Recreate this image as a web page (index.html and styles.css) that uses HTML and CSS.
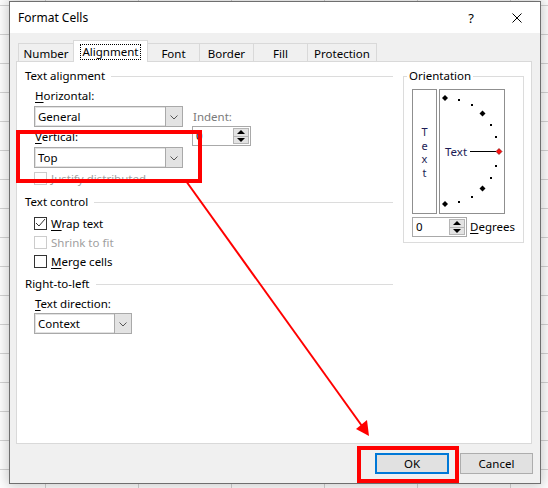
FILE: index.html
```html
<!DOCTYPE html>
<html lang="en">
<head>
<meta charset="utf-8">
<title>Format Cells</title>
<link rel="stylesheet" href="styles.css">
</head>
<body>
<div class="dialog">
  <div class="titlebar">
    <span class="title">Format Cells</span>
    <span class="tb-btn help">?</span>
    <span class="tb-btn close"><svg width="10" height="10" viewBox="0 0 10 10"><path d="M0.5 0.5 L9.5 9.5 M9.5 0.5 L0.5 9.5" stroke="#000" stroke-width="1" fill="none"/></svg></span>
  </div>
  <div class="body">
    <div class="tabs">
      <div class="tab t-number">Number</div>
      <div class="tab t-align active"><span class="focus">Alignment</span></div>
      <div class="tab t-font">Font</div>
      <div class="tab t-border">Border</div>
      <div class="tab t-fill">Fill</div>
      <div class="tab t-prot">Protection</div>
    </div>
    <div class="panel">
      <div class="left">
        <div class="group-head">Text alignment</div>
        <div class="group-body align-grid">
          <div class="col-main">
            <div class="lbl"><u>H</u>orizontal:</div>
            <div class="combo c-wide"><span class="val">General</span><span class="dd"><svg width="8" height="5" viewBox="0 0 8 5"><polyline points="0.5,0.5 4,4 7.5,0.5" fill="none" stroke="#555" stroke-width="1"/></svg></span></div>
            <div class="lbl lbl-next"><u>V</u>ertical:</div>
            <div class="combo c-wide"><span class="val">Top</span><span class="dd"><svg width="8" height="5" viewBox="0 0 8 5"><polyline points="0.5,0.5 4,4 7.5,0.5" fill="none" stroke="#555" stroke-width="1"/></svg></span></div>
          </div>
          <div class="col-indent">
            <div class="lbl dis-dark">Indent:</div>
            <div class="spin s-indent"><span class="val">0</span><span class="spin-btns"><span class="sb up"></span><span class="sb down"></span></span></div>
          </div>
        </div>
        <div class="group-body">
          <div class="check-row dis r-justify"><span class="box"></span><span>Justify distributed</span></div>
        </div>

        <div class="group-head h-control">Text control</div>
        <div class="group-body">
          <div class="check-row r-first"><span class="box"><svg width="11" height="11" viewBox="0 0 11 11"><polyline points="1,5 4,8 10,1" fill="none" stroke="#333" stroke-width="1"/></svg></span><span><u>W</u>rap text</span></div>
          <div class="check-row dis r-next"><span class="box"></span><span>Shrink to fit</span></div>
          <div class="check-row r-next"><span class="box"></span><span><u>M</u>erge cells</span></div>
        </div>

        <div class="group-head h-rtl">Right-to-left</div>
        <div class="group-body">
          <div class="lbl lbl-dir"><u>T</u>ext direction:</div>
          <div class="combo c-narrow"><span class="val">Context</span><span class="dd"><svg width="8" height="5" viewBox="0 0 8 5"><polyline points="0.5,0.5 4,4 7.5,0.5" fill="none" stroke="#555" stroke-width="1"/></svg></span></div>
        </div>
      </div>

      <fieldset class="orient">
        <legend>Orientation</legend>
        <div class="orient-boxes">
          <div class="vtext"><span>T</span><span>e</span><span>x</span><span>t</span></div>
          <div class="dial">
            <svg width="64" height="123" viewBox="0 0 64 123">
              <g fill="#000">
                <polygon points="5,5 8,8 5,11 2,8"/>
                <polygon points="42.5,20.5 45.5,23.5 42.5,26.5 39.5,23.5"/>
                <polygon points="42.5,95.5 45.5,98.5 42.5,101.5 39.5,98.5"/>
                <polygon points="5,111 8,114 5,117 2,114"/>
                <rect x="18" y="9" width="2" height="2"/>
                <rect x="31" y="14" width="2" height="2"/>
                <rect x="50" y="34" width="2" height="2"/>
                <rect x="55" y="46" width="2" height="2"/>
                <rect x="55" y="75" width="2" height="2"/>
                <rect x="50" y="87" width="2" height="2"/>
                <rect x="31" y="106" width="2" height="2"/>
                <rect x="18" y="111" width="2" height="2"/>
              </g>
              <line x1="30" y1="61.5" x2="56" y2="61.5" stroke="#000" stroke-width="1"/>
              <polygon points="59,58.5 62,61.5 59,64.5 56,61.5" fill="#ff1010" stroke="#600" stroke-width="0.6"/>
              <text x="5" y="66" class="dial-text">Text</text>
            </svg>
          </div>
        </div>
        <div class="deg-row">
          <div class="spin s-deg"><span class="val">0</span><span class="spin-btns"><span class="sb up"></span><span class="sb down"></span></span></div>
          <span class="deg-lbl"><u>D</u>egrees</span>
        </div>
      </fieldset>
    </div>
    <div class="buttons">
      <div class="btn btn-ok">OK</div>
      <div class="btn btn-cancel">Cancel</div>
    </div>
  </div>
</div>

<svg class="marks" width="548" height="488" viewBox="0 0 548 488">
  <rect x="18" y="132" width="182" height="49" fill="none" stroke="#ff0000" stroke-width="4"/>
  <line x1="186" y1="181" x2="362" y2="426" stroke="#ff0000" stroke-width="2"/>
  <polygon points="369,436 356,429 367,420" fill="#ff0000"/>
  <rect x="359" y="448" width="98" height="33" fill="none" stroke="#ff0000" stroke-width="4"/>
</svg>
</body>
</html>
```

FILE: styles.css
```css
* { box-sizing: border-box; }

html {
  background: #fff;
}

body {
  margin: 0;
  padding: 1px 0 0 9px;
  width: 548px;
  height: 488px;
  overflow: hidden;
  position: relative;
  font-family: "Segoe UI", "Noto Sans", sans-serif;
  font-size: 11.5px;
  color: #000;
  background-color: #fff;
  /* worksheet gridlines behind the dialog */
  background-image:
    linear-gradient(to right, #d4d4d4 1px, transparent 1px),
    linear-gradient(to bottom, #d4d4d4 1px, transparent 1px);
  background-size: 93px 100%, 100% 29px;
  background-position: 45px 0, 0 5px;
}

u { text-decoration: underline; text-underline-offset: 2px; }

/* ---------- dialog window ---------- */
.dialog {
  width: 532px;
  height: 483px;
  border: 1px solid #6f6f6f;
  background: #f0f0f0;
  box-shadow: 0 0 12px 2px rgba(0, 0, 0, 0.22);
  display: flex;
  flex-direction: column;
}

.titlebar {
  height: 31px;
  background: #fff;
  display: flex;
  align-items: center;
  padding-left: 8px;
  flex: none;
}

.title {
  flex: 1;
  line-height: 16px;
  font-size: 12px;
}

.tb-btn {
  width: 46px;
  height: 31px;
  display: flex;
  align-items: center;
  justify-content: center;
}

.help {
  font-size: 13px;
}

.body {
  flex: 1;
  padding: 7px 8px 0 6px;
  display: flex;
  flex-direction: column;
}

/* ---------- tabs ---------- */
.tabs {
  display: flex;
  align-items: flex-end;
  height: 21px;
  padding-left: 2px;
}

.tab {
  height: 18px;
  border: 1px solid #d9d9d9;
  border-bottom: none;
  background: #f0f0f0;
  display: flex;
  align-items: center;
  justify-content: center;
  padding-top: 2px;
  margin-left: -1px;
  line-height: 14px;
}

.tab:first-child { margin-left: 0; }

.t-number { width: 56px; }
.t-align { width: 75px; }
.t-font { width: 53px; }
.t-border { width: 55px; }
.t-fill { width: 55px; }
.t-prot { width: 70px; }

.tab.active {
  height: 22px;
  margin-bottom: -1px;
  background: #fff;
  position: relative;
  z-index: 1;
  padding-top: 1px;
}

.focus {
  outline: 1px dotted #000;
  padding: 0 2px;
  line-height: 14px;
}

/* ---------- page panel ---------- */
.panel {
  height: 383px;
  border: 1px solid #d9d9d9;
  background: #fff;
  display: flex;
  align-items: flex-start;
  padding: 6px 7px 0 8px;
  flex: none;
}

.left {
  width: 368px;
  flex: none;
}

.group-head {
  display: flex;
  align-items: center;
  height: 16px;
  line-height: 16px;
  white-space: nowrap;
}

.group-head::after {
  content: "";
  flex: 1;
  height: 1px;
  background: #dcdcdc;
  margin-left: 6px;
}

.h-control { margin-top: 8px; }
.h-rtl { margin-top: 7px; }

.group-body {
  padding-left: 9px;
}

.align-grid {
  display: flex;
  margin-top: 4px;
}

.col-main { width: 149px; }

.col-indent {
  margin-left: 9px;
  margin-top: 21px;
}

.lbl {
  height: 16px;
  line-height: 16px;
  white-space: nowrap;
  padding-left: 1px;
}

.lbl-next { margin-top: 2px; }
.lbl-dir { margin-top: 4px; }

.dis-dark { color: #7a7a7a; }

/* drop-down list */
.combo {
  display: flex;
  height: 21px;
  border: 1px solid #a9a9a9;
  box-shadow: inset 0 0 0 1px #e2e2e2;
  background: #fff;
  margin-top: 2px;
}

.c-wide { width: 149px; }
.c-narrow { width: 98px; margin-top: 1px; }

.combo .val {
  flex: 1;
  padding-left: 3px;
  line-height: 19px;
}

.combo .dd {
  width: 17px;
  background: #e3e3e3;
  border-left: 1px solid #a9a9a9;
  display: flex;
  align-items: center;
  justify-content: center;
  padding-top: 1px;
}

/* spin box */
.spin {
  display: flex;
  height: 20px;
  border: 1px solid #a9a9a9;
  background: #fff;
}

.s-indent { width: 59px; margin-top: 1px; }
.s-deg { width: 60px; }

.spin .val {
  flex: 1;
  padding-left: 3px;
  line-height: 18px;
}

.spin-btns {
  width: 17px;
  display: flex;
  flex-direction: column;
  padding: 1px 1px 1px 0;
}

.sb {
  flex: 1;
  background: #e3e3e3;
  border: 1px solid #b5b5b5;
  display: flex;
  align-items: center;
  justify-content: center;
}

.sb + .sb { border-top: none; }

.sb::before {
  content: "";
  width: 0;
  height: 0;
  border-left: 4px solid transparent;
  border-right: 4px solid transparent;
}

.sb.up::before { border-bottom: 4px solid #000; }
.sb.down::before { border-top: 4px solid #000; }

/* check boxes */
.check-row {
  display: flex;
  align-items: center;
  height: 16px;
  gap: 4px;
  white-space: nowrap;
}

.check-row .box {
  width: 13px;
  height: 13px;
  border: 1px solid #333;
  background: #fff;
  display: flex;
  align-items: center;
  justify-content: center;
  flex: none;
}

.check-row.dis { color: #a0a0a0; }
.check-row.dis .box { border-color: #cccccc; }

.r-justify { margin-top: 2px; }
.r-first { margin-top: 5px; }
.r-next { margin-top: 3px; }

/* ---------- orientation ---------- */
.orient {
  margin: 0 0 0 10px;
  padding: 0 8px 5px 8px;
  border: 1px solid #dcdcdc;
  width: 121px;
  height: 175px;
  min-width: 0;
  flex: none;
}

.orient legend {
  padding: 0 2px;
  margin-left: -5px;
  line-height: 16px;
}

.orient-boxes {
  display: flex;
  gap: 2px;
  margin-top: 5px;
}

.vtext, .dial {
  height: 125px;
  border: 1px solid #8f8f8f;
  background: #fff;
}

.vtext {
  width: 25px;
  display: flex;
  flex-direction: column;
  align-items: center;
  justify-content: center;
  color: #1c1c55;
  padding-top: 1px;
  font-size: 11px;
}

.vtext span {
  height: 13.5px;
  line-height: 13.5px;
}

.dial {
  width: 66px;
}

.dial svg { display: block; }

.dial-text {
  font-family: "Segoe UI", "Noto Sans", sans-serif;
  font-size: 11.5px;
  fill: #1c1c55;
}

.deg-row {
  display: flex;
  align-items: center;
  margin-top: 3px;
}

.deg-lbl {
  margin-left: 3px;
  line-height: 16px;
}

/* ---------- buttons ---------- */
.buttons {
  display: flex;
  justify-content: flex-end;
  gap: 11px;
  margin-top: 9px;
  margin-right: -1px;
}

.btn {
  height: 21px;
  background: #e1e1e1;
  border: 1px solid #adadad;
  display: flex;
  align-items: center;
  justify-content: center;
  line-height: 16px;
}

.btn-ok {
  width: 74px;
  border: 2px solid #0078d7;
}

.btn-cancel {
  width: 73px;
}

/* ---------- callout marks drawn over the dialog ---------- */
.marks {
  position: absolute;
  left: 0;
  top: 0;
  pointer-events: none;
}
```
